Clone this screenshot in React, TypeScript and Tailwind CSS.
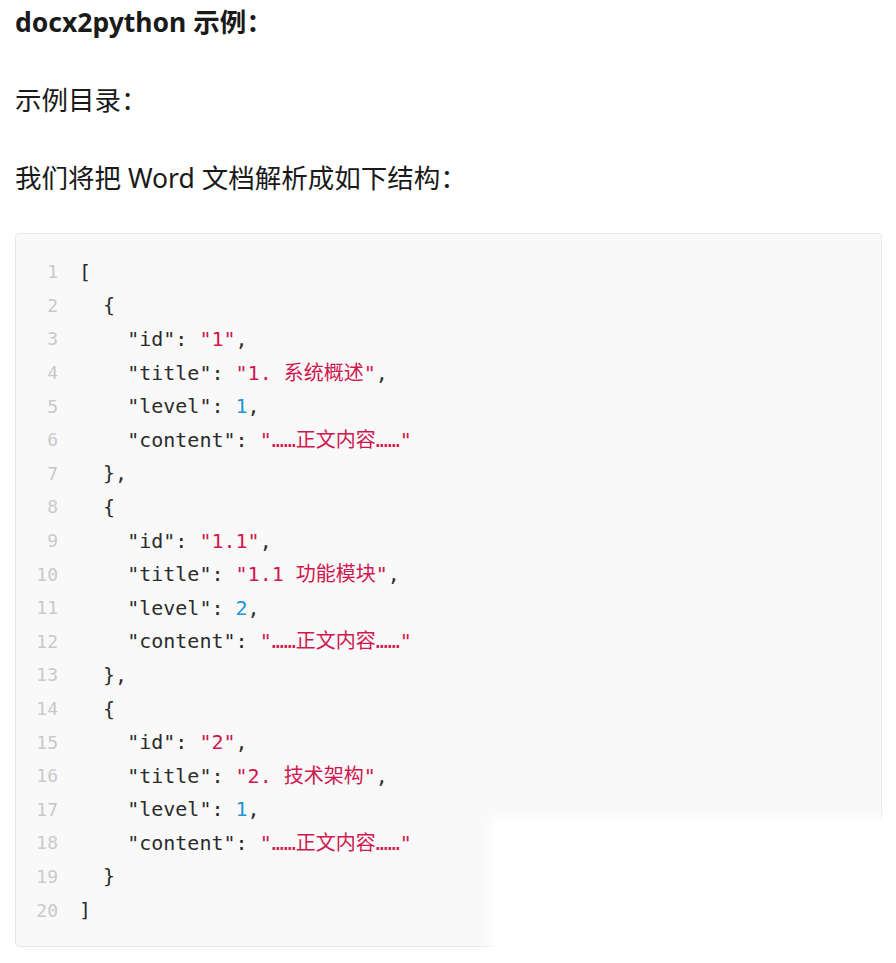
import React from 'react';

type Tok = { t: string; c?: 'k' | 's' | 'n' | 'p' };

const S = (t: string): Tok => ({ t, c: 's' });
const N = (t: string): Tok => ({ t, c: 'n' });
const P = (t: string): Tok => ({ t });

const entry = (id: string, title: string, level: string, last: boolean): Tok[][] => [
  [P('  {')],
  [P('    "id": '), S(`"${id}"`), P(',')],
  [P('    "title": '), S(`"${title}"`), P(',')],
  [P('    "level": '), N(level), P(',')],
  [P('    "content": '), S('"……正文内容……"')],
  [P(last ? '  }' : '  },')],
];

const lines: Tok[][] = [
  [P('[')],
  ...entry('1', '1. 系统概述', '1', false),
  ...entry('1.1', '1.1 功能模块', '2', false),
  ...entry('2', '2. 技术架构', '1', true),
  [P(']')],
];

const color = (c?: string) =>
  c === 's' ? 'text-[#d0174f]' : c === 'n' ? 'text-[#1f95d3]' : 'text-[#2b2b2b]';

const App: React.FC = () => {
  return (
    <div className="relative w-[896px] h-[963px] overflow-hidden bg-white px-[15px] pt-[5px] text-[#1a1a1a] font-['Noto_Sans','Noto_Sans_CJK_SC',sans-serif]">
      <h3 className="text-[26.5px] leading-[34px] font-bold">docx2python 示例：</h3>
      <p className="mt-[44px] text-[26.5px] leading-[34px]">示例目录：</p>
      <p className="mt-[44px] text-[26.5px] leading-[34px]">我们将把 Word 文档解析成如下结构：</p>

      <div className="mt-[38px] w-[867px] rounded-[4px] border border-[#e8e8e8] bg-[#f9f9f9] pt-[21px] pb-[19px]">
        {lines.map((toks, i) => (
          <div key={i} className="flex h-[33.6px] items-center whitespace-pre text-[20px] font-['DejaVu_Sans_Mono','Noto_Sans_CJK_SC',monospace]">
            <span className="w-[42px] text-right text-[18px] text-[#c9c9c9]">{i + 1}</span>
            <span className="ml-[21px]">
              {toks.map((tk, j) => (
                <span key={j} className={color(tk.c)}>{tk.t}</span>
              ))}
            </span>
          </div>
        ))}
      </div>

      {/* white overlay artifact in the lower right */}
      <div className="absolute left-[495px] top-[822px] h-[160px] w-[420px] bg-white shadow-[0_0_12px_6px_rgba(255,255,255,0.9)]" />
    </div>
  );
};

export default App;
